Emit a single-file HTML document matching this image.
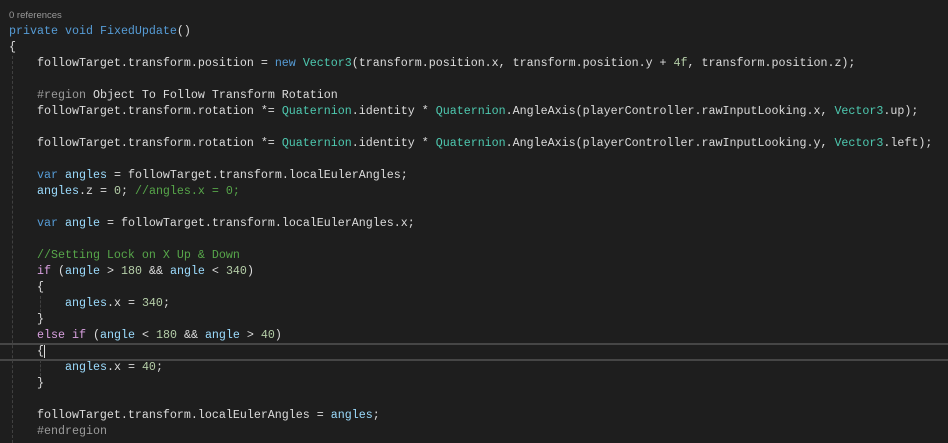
<!DOCTYPE html>
<html><head><meta charset="utf-8"><style>
html,body{margin:0;padding:0;background:#1e1e1e;width:948px;height:443px;overflow:hidden}
.ed{position:relative;width:948px;height:443px}
.ref{position:absolute;left:9px;top:10px;font:9.5px "Liberation Sans",sans-serif;color:#999}
pre{position:absolute;left:9px;top:23px;margin:0;font:11.67px/16px "Liberation Mono",monospace;color:#dcdcdc;white-space:pre}
.k{color:#569cd6}.t{color:#4ec9b0}.n{color:#b5cea8}.c{color:#57a64a}.p{color:#9b9b9b}.f{color:#d8a0df}.v{color:#9cdcfe}
.g{position:absolute;border-left:1px dashed #404040}
.hl{position:absolute;left:0;top:343px;width:948px;height:14px;border-top:2px solid #464646;border-bottom:2px solid #464646}
.cur{position:absolute;left:44px;top:345px;width:1px;height:13px;background:#dcdcdc}
</style></head><body><div class="ed">
<div class="hl"></div>
<div class="g" style="left:12px;top:56px;height:387px"></div>
<div class="g" style="left:40px;top:296px;height:16px"></div>
<div class="g" style="left:40px;top:360px;height:16px"></div>
<div class="ref">0 references</div>
<pre><span class="k">private</span> <span class="k">void</span> <span class="k">FixedUpdate</span>()
{
    followTarget.transform.position = <span class="k">new</span> <span class="t">Vector3</span>(transform.position.x, transform.position.y + <span class="n">4f</span>, transform.position.z);

    <span class="p">#region</span> Object To Follow Transform Rotation
    followTarget.transform.rotation *= <span class="t">Quaternion</span>.identity * <span class="t">Quaternion</span>.AngleAxis(playerController.rawInputLooking.x, <span class="t">Vector3</span>.up);

    followTarget.transform.rotation *= <span class="t">Quaternion</span>.identity * <span class="t">Quaternion</span>.AngleAxis(playerController.rawInputLooking.y, <span class="t">Vector3</span>.left);

    <span class="k">var</span> <span class="v">angles</span> = followTarget.transform.localEulerAngles;
    <span class="v">angles</span>.z = <span class="n">0</span>; <span class="c">//angles.x = 0;</span>

    <span class="k">var</span> <span class="v">angle</span> = followTarget.transform.localEulerAngles.x;

    <span class="c">//Setting Lock on X Up &amp; Down</span>
    <span class="f">if</span> (<span class="v">angle</span> &gt; <span class="n">180</span> &amp;&amp; <span class="v">angle</span> &lt; <span class="n">340</span>)
    {
        <span class="v">angles</span>.x = <span class="n">340</span>;
    }
    <span class="f">else</span> <span class="f">if</span> (<span class="v">angle</span> &lt; <span class="n">180</span> &amp;&amp; <span class="v">angle</span> &gt; <span class="n">40</span>)
    {
        <span class="v">angles</span>.x = <span class="n">40</span>;
    }

    followTarget.transform.localEulerAngles = <span class="v">angles</span>;
    <span class="p">#endregion</span></pre>
<div class="cur"></div>
</div></body></html>
